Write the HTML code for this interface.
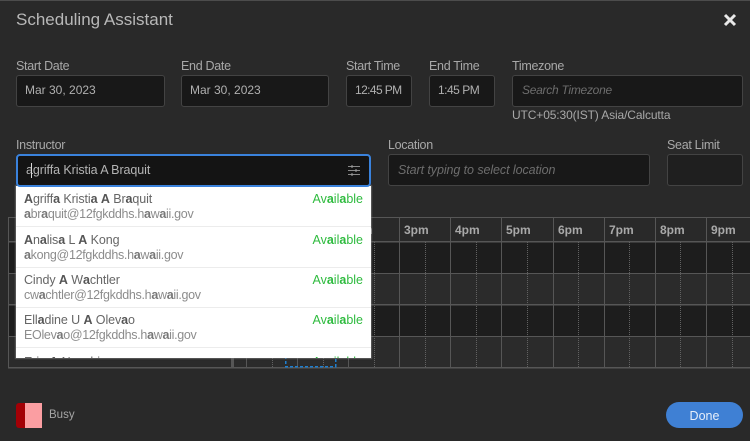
<!DOCTYPE html>
<html>
<head>
<meta charset="utf-8">
<style>
html,body{margin:0;padding:0;background:#292929;}
body{width:750px;height:441px;overflow:hidden;position:relative;font-family:"Liberation Sans",sans-serif;}
#page{position:absolute;left:0;top:0;width:750px;height:441px;background:#292929;overflow:hidden;filter:blur(0.35px);}
.t{position:absolute;white-space:nowrap;line-height:1;}
.l{color:#a8a8a8;font-size:12.5px;letter-spacing:-.3px;}
.box{position:absolute;box-sizing:border-box;background:#181818;border:1px solid #434343;border-radius:3px;}
.v{color:#b0b0b0;font-size:12px;letter-spacing:0;}
.ph{color:#6d6d6d;font-size:12.5px;font-style:italic;letter-spacing:-.08px;}
.h{color:#a9a9a9;font-size:12px;font-weight:bold;letter-spacing:0;top:224px;}
#dd{position:absolute;left:16px;top:186px;width:355px;height:172px;background:#fff;overflow:hidden;box-shadow:0 0 1px 1px rgba(130,130,130,.6);}
.row{position:absolute;left:0;width:355px;height:40px;border-bottom:1.5px solid #ececec;box-sizing:content-box;}
.n{position:absolute;left:8px;top:7px;font-size:12.5px;line-height:1;letter-spacing:-.09px;color:#666;white-space:nowrap;}
.e{position:absolute;left:8px;top:22px;font-size:12.5px;line-height:1;letter-spacing:-.3px;color:#8c8c8c;white-space:nowrap;}
.a{position:absolute;right:8px;top:7px;font-size:12.5px;line-height:1;letter-spacing:0;color:#2fbb3f;white-space:nowrap;}
b{font-weight:bold;color:#555;}
.e b{color:#777;}
.a b{color:#2fbb3f;}
</style>
</head>
<body>
<div id="page">
<div style="position:absolute;left:0;top:0;width:750px;height:1px;background:#4c4c4c;"></div>
<div class="t" style="left:16px;top:11px;font-size:17px;color:#b8b8b8;letter-spacing:0;">Scheduling Assistant</div>
<svg style="position:absolute;left:723px;top:13px;" width="14" height="14" viewBox="0 0 14 14"><path d="M2 2L12 12M12 2L2 12" stroke="#e8e8e8" stroke-width="3"/></svg>

<div class="t l" style="left:16px;top:60px;">Start Date</div>
<div class="box" style="left:16px;top:75px;width:149px;height:32px;"></div>
<div class="t v" style="left:25px;top:84px;">Mar 30, 2023</div>
<div class="t l" style="left:181px;top:60px;">End Date</div>
<div class="box" style="left:181px;top:75px;width:148px;height:32px;"></div>
<div class="t v" style="left:190px;top:84px;">Mar 30, 2023</div>
<div class="t l" style="left:346px;top:60px;">Start Time</div>
<div class="box" style="left:346px;top:75px;width:66px;height:32px;"></div>
<div class="t v" style="left:355px;top:84px;letter-spacing:-.6px;">12:45 PM</div>
<div class="t l" style="left:429px;top:60px;">End Time</div>
<div class="box" style="left:429px;top:75px;width:66px;height:32px;"></div>
<div class="t v" style="left:438px;top:84px;letter-spacing:-.5px;">1:45 PM</div>
<div class="t l" style="left:512px;top:60px;">Timezone</div>
<div class="box" style="left:512px;top:75px;width:231px;height:32px;"></div>
<div class="t ph" style="left:522px;top:84px;font-size:12px;letter-spacing:-.27px;">Search Timezone</div>
<div class="t" style="left:512px;top:109px;font-size:12px;color:#a8a8a8;letter-spacing:-.12px;">UTC+05:30(IST) Asia/Calcutta</div>

<div class="t l" style="left:16px;top:139px;">Instructor</div>
<div class="t l" style="left:388px;top:139px;">Location</div>
<div class="box" style="left:388px;top:154px;width:262px;height:32px;"></div>
<div class="t ph" style="left:398px;top:164px;">Start typing to select location</div>
<div class="t l" style="left:667px;top:139px;">Seat Limit</div>
<div class="box" style="left:667px;top:154px;width:76px;height:32px;background:#1f1f1f;"></div>

<svg style="position:absolute;left:0;top:210px;" width="750" height="165" viewBox="0 210 750 165" shape-rendering="crispEdges">
<rect x="8" y="217" width="742" height="151" fill="#292929"/>
<rect x="8" y="242" width="742" height="31" fill="#1d1d1d"/>
<rect x="8" y="273" width="742" height="32" fill="#2b2b2b"/>
<rect x="8" y="305" width="742" height="31" fill="#1d1d1d"/>
<rect x="8" y="336" width="742" height="32" fill="#2b2b2b"/>
<g fill="#565656">
<rect x="8" y="217" width="742" height="1"/>
<rect x="8" y="241" width="742" height="1.5"/>
<rect x="8" y="273" width="742" height="1"/>
<rect x="8" y="304" width="742" height="1.5"/>
<rect x="8" y="336" width="742" height="1"/>
<rect x="8" y="367" width="742" height="1.5"/>
<rect x="8" y="217" width="1" height="151"/>
<rect x="231" y="217" width="3" height="151"/>
<rect x="246" y="217" width="1" height="151"/>
<rect x="297" y="217" width="1" height="151"/>
<rect x="348" y="217" width="1" height="151"/>
<rect x="399" y="217" width="1" height="151"/>
<rect x="450" y="217" width="1" height="151"/>
<rect x="501" y="217" width="1" height="151"/>
<rect x="553" y="217" width="1" height="151"/>
<rect x="604" y="217" width="1" height="151"/>
<rect x="655" y="217" width="1" height="151"/>
<rect x="706" y="217" width="1" height="151"/>
</g>
<g stroke="#626262" stroke-width="1" stroke-dasharray="1 1">
<path d="M272.500 242V367M323.500 242V367M374.500 242V367M425.500 242V367M476.500 242V367M527.500 242V367M578.500 242V367M629.500 242V367M680.500 242V367M732.500 242V367"/>
</g>
<path d="M285.500 356V366.500H335.500V356" fill="none" stroke="#1e7fd0" stroke-width="1.500" stroke-dasharray="3 2"/>
<g fill="#3fbf4c"><rect x="316" y="356" width="3" height="2"/><rect x="336" y="356" width="3" height="2"/><rect x="348" y="355" width="1" height="3"/><rect x="355" y="355" width="1" height="3"/></g>
</svg>

<div class="t h" style="left:362px;">m</div>
<div class="t h" style="left:404px;">3pm</div>
<div class="t h" style="left:455px;">4pm</div>
<div class="t h" style="left:506px;">5pm</div>
<div class="t h" style="left:558px;">6pm</div>
<div class="t h" style="left:609px;">7pm</div>
<div class="t h" style="left:660px;">8pm</div>
<div class="t h" style="left:711px;">9pm</div>

<div id="dd">
<div class="row" style="top:0;"><div class="n"><b>A</b>griff<b>a</b> Kristi<b>a</b> <b>A</b> Br<b>a</b>quit</div><div class="e"><b>a</b>br<b>a</b>quit@12fgkddhs.h<b>a</b>w<b>a</b>ii.gov</div><div class="a">Av<b>a</b>il<b>a</b>ble</div></div>
<div class="row" style="top:40.500px;"><div class="n"><b>A</b>n<b>a</b>lis<b>a</b> L <b>A</b> Kong</div><div class="e"><b>a</b>kong@12fgkddhs.h<b>a</b>w<b>a</b>ii.gov</div><div class="a">Av<b>a</b>il<b>a</b>ble</div></div>
<div class="row" style="top:81px;"><div class="n">Cindy <b>A</b> W<b>a</b>chtler</div><div class="e">cw<b>a</b>chtler@12fgkddhs.h<b>a</b>w<b>a</b>ii.gov</div><div class="a">Av<b>a</b>il<b>a</b>ble</div></div>
<div class="row" style="top:121px;"><div class="n">Ell<b>a</b>dine U <b>A</b> Olev<b>a</b>o</div><div class="e">EOlev<b>a</b>o@12fgkddhs.h<b>a</b>w<b>a</b>ii.gov</div><div class="a">Av<b>a</b>il<b>a</b>ble</div></div>
<div class="row" style="top:162.500px;"><div class="n">Erin <b>A</b> Naeshiro</div><div class="a">Av<b>a</b>il<b>a</b>ble</div></div>
</div>

<div class="box" style="left:16px;top:153.500px;width:355px;height:33px;background:#141414;border:2px solid #3a82dc;border-radius:4px;"></div>
<div class="t" style="left:26px;top:164px;font-size:12.500px;color:#b4b4b4;letter-spacing:-.08px;">agriffa Kristia A Braquit</div>
<div style="position:absolute;left:31px;top:163px;width:1px;height:15px;background:#d8d8d8;"></div>
<svg style="position:absolute;left:348px;top:165px;" width="12" height="11" viewBox="0 0 12 11" fill="none" stroke="#8a8a8a" stroke-width="1"><path d="M0 1.500H12M0 5.500H12M0 9.500H12"/><path d="M4 0V3M8 4V7M4 8V11" stroke="#a0a0a0"/></svg>

<div style="position:absolute;left:16px;top:403px;width:9px;height:25px;background:#a30006;border-radius:3px 0 0 3px;"></div>
<div style="position:absolute;left:25px;top:403px;width:17px;height:25px;background:#fb9ea2;"></div>
<div class="t" style="left:49px;top:410px;font-size:11.500px;color:#a5a5a5;letter-spacing:0;">Busy</div>

<div style="position:absolute;left:666px;top:402px;width:77px;height:26px;border-radius:13px;background:#3f80d4;"></div>
<div class="t" style="left:666px;width:77px;text-align:center;top:410px;font-size:12.500px;color:#e6eefa;letter-spacing:0;">Done</div>
</div>
</body>
</html>
